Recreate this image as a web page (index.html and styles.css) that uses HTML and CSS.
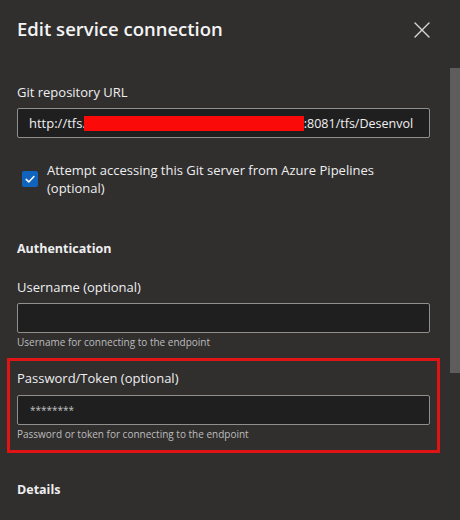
FILE: index.html
```html
<!DOCTYPE html>
<html lang="en">
<head>
<meta charset="utf-8">
<title>Edit service connection</title>
<link rel="stylesheet" href="styles.css">
</head>
<body>
<div class="panel">
  <div class="header">
    <h1 class="title">Edit service connection</h1>
    <button class="close" aria-label="Close">
      <svg width="16" height="16" viewBox="0 0 16 16"><path d="M1 1 L15 15 M15 1 L1 15" stroke="#d8d8d8" stroke-width="1.4" fill="none" stroke-linecap="round"/></svg>
    </button>
  </div>

  <div class="field url-field">
    <div class="label">Git repository URL</div>
    <div class="input"><span class="value">http://tfs.<span class="redact"></span><span class="tail">:8081/tfs/Desenvol</span></span></div>
  </div>

  <div class="check-row">
    <span class="checkbox">
      <svg width="16" height="16" viewBox="0 0 16 16"><path d="M4.2 8.4 L6.8 10.9 L11.9 5.6" stroke="#fff" stroke-width="1.5" fill="none" stroke-linecap="round" stroke-linejoin="round"/></svg>
    </span>
    <span class="check-label">Attempt accessing this Git server from Azure Pipelines<br>(optional)</span>
  </div>

  <div class="section auth">Authentication</div>

  <div class="field user-field">
    <div class="label">Username (optional)</div>
    <div class="input"></div>
    <div class="helper">Username for connecting to the endpoint</div>
  </div>

  <div class="field pass-field highlight">
    <div class="label">Password/Token (optional)</div>
    <div class="input"><span class="mask">********</span></div>
    <div class="helper">Password or token for connecting to the endpoint</div>
  </div>

  <div class="section details">Details</div>
</div>
<div class="scrollbar"></div>
</body>
</html>
```
FILE: styles.css
```css
html, body {
  margin: 0;
  padding: 0;
}
body {
  width: 460px;
  height: 520px;
  overflow: hidden;
  position: relative;
  background: #302f2e;
  color: #f2f2f2;
  font-family: "Open Sans", "Noto Sans", sans-serif;
}
.panel {
  padding: 15px 30px 0 17px;
}
.header {
  display: flex;
  justify-content: space-between;
  align-items: center;
  height: 28px;
}
.title {
  margin: 0;
  font-size: 18.5px;
  line-height: 28px;
  font-weight: 600;
  color: #f4f4f4;
}
.close {
  background: none;
  border: 0;
  padding: 0;
  margin: 2px 0 0 0;
  width: 16px;
  height: 16px;
  display: flex;
}
.url-field {
  margin-top: 39px;
}
.label {
  font-size: 13px;
  line-height: 20px;
  color: #eeeeee;
  margin-bottom: 6px;
}
.input {
  box-sizing: border-box;
  height: 30px;
  border: 1px solid #8f8f8f;
  border-radius: 2px;
  background: #1f1f1f;
  padding: 0 10px 0 11px;
  display: flex;
  align-items: center;
  overflow: hidden;
  font-size: 13px;
  color: #f0f0f0;
}
.value {
  white-space: nowrap;
  overflow: hidden;
}
.redact {
  display: inline-block;
  width: 220px;
  height: 15px;
  background: #fb0a0a;
  vertical-align: -3px;
  margin-left: -2px;
}
.tail {
  font-size: 12.5px;
}
.check-row {
  display: flex;
  align-items: center;
  margin-top: 23px;
  padding-left: 5px;
}
.checkbox {
  width: 16px;
  height: 16px;
  border-radius: 2px;
  background: #1164bd;
  display: flex;
  flex-shrink: 0;
}
.check-label {
  margin-left: 9px;
  font-size: 13px;
  line-height: 18px;
  color: #eeeeee;
}
.section {
  font-size: 12.5px;
  line-height: 20px;
  font-weight: 700;
  color: #eeeeee;
}
.auth {
  margin-top: 42px;
}
.user-field {
  margin-top: 18px;
}
.helper {
  margin-top: 2px;
  font-size: 10px;
  line-height: 14px;
  color: #bdbdbd;
}
.highlight {
  margin: 9px -10px 0 -10px;
  padding: 7px 7px 9px 7px;
  border: 3px solid #e01414;
}
.pass-field .label {
  margin-bottom: 7px;
}
.mask {
  font-size: 10px;
  color: #c4c4c4;
  margin-left: 1px;
}
.details {
  margin-top: 27px;
}
.scrollbar {
  position: absolute;
  right: 0;
  top: 68px;
  width: 10px;
  height: 305px;
  background: #5d5d5d;
}
```
